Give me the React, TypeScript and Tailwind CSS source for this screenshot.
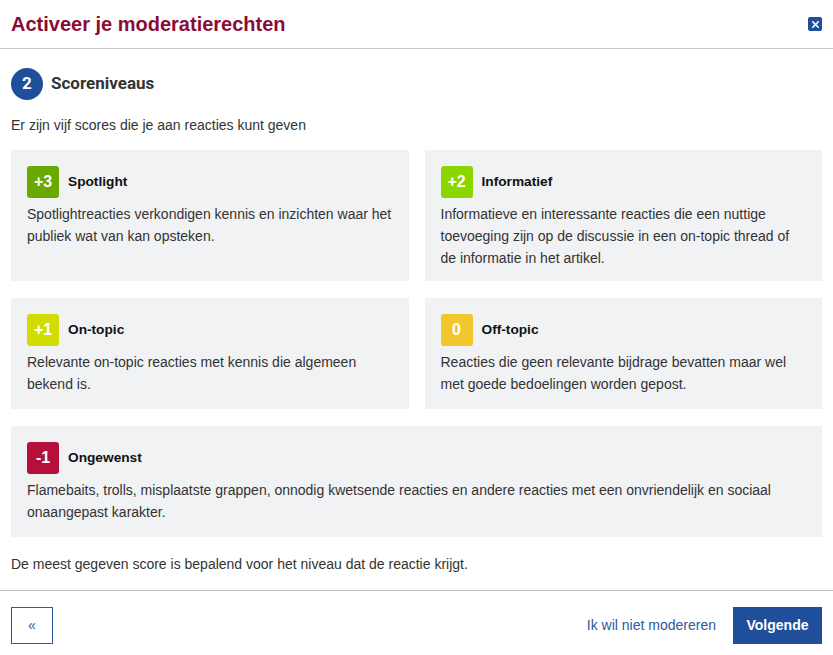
import { X } from "lucide-react";

type Score = {
  badge: string;
  color: string;
  title: string;
  text: string;
  wide?: boolean;
};

const scores: Score[] = [
  {
    badge: "+3",
    color: "bg-[#6aaa00]",
    title: "Spotlight",
    text: "Spotlightreacties verkondigen kennis en inzichten waar het publiek wat van kan opsteken.",
  },
  {
    badge: "+2",
    color: "bg-[#8cd600]",
    title: "Informatief",
    text: "Informatieve en interessante reacties die een nuttige toevoeging zijn op de discussie in een on-topic thread of de informatie in het artikel.",
  },
  {
    badge: "+1",
    color: "bg-[#d2dc00]",
    title: "On-topic",
    text: "Relevante on-topic reacties met kennis die algemeen bekend is.",
  },
  {
    badge: "0",
    color: "bg-[#f2c72c]",
    title: "Off-topic",
    text: "Reacties die geen relevante bijdrage bevatten maar wel met goede bedoelingen worden gepost.",
  },
  {
    badge: "-1",
    color: "bg-[#b5103c]",
    title: "Ongewenst",
    text: "Flamebaits, trolls, misplaatste grappen, onnodig kwetsende reacties en andere reacties met een onvriendelijk en sociaal onaangepast karakter.",
    wide: true,
  },
];

function ScoreCard({ s }: { s: Score }) {
  return (
    <div className={`min-h-[111px] bg-[#f1f2f4] px-4 pt-4 pb-3 ${s.wide ? "col-span-2" : ""}`}>
      <div className="flex items-center gap-[9px]">
        <span
          className={`${s.color} flex h-8 w-8 items-center justify-center rounded-[3px] text-[16px] font-bold text-white`}
        >
          {s.badge}
        </span>
        <span className="text-[13.7px] font-bold text-[#111]">{s.title}</span>
      </div>
      <p className="mt-[5px] text-[14px] leading-[22px] text-[#333]">{s.text}</p>
    </div>
  );
}

export default function App() {
  return (
    <div className="h-[655px] w-[833px] bg-white font-['Liberation_Sans',Arial,sans-serif] text-[#333]">
      <div className="flex h-[49px] items-center justify-between border-b border-[#c8c8c8] pl-[11px] pr-[11px]">
        <h1 className="text-[20px] font-bold text-[#8c0b35]">Activeer je moderatierechten</h1>
        <button
          type="button"
          className="flex h-[14px] w-[14px] items-center justify-center rounded-[2px] bg-[#1f4e9b] text-white"
        >
          <X size={11} strokeWidth={3.5} />
        </button>
      </div>

      <div className="px-[11px]">
        <div className="mt-[19px] flex items-center gap-2">
          <span className="flex h-8 w-8 items-center justify-center rounded-full bg-[#1f4e9b] font-['Roboto',sans-serif] text-[17px] font-bold text-white">
            2
          </span>
          <span className="font-['Roboto',sans-serif] text-[17px] font-bold text-[#333]">
            Scoreniveaus
          </span>
        </div>

        <p className="mt-[15px] text-[14px] leading-5 text-[#333]">
          Er zijn vijf scores die je aan reacties kunt geven
        </p>

        <div className="mt-[15px] grid grid-cols-2 gap-x-4 gap-y-[17px]">
          {scores.map((s) => (
            <ScoreCard key={s.badge} s={s} />
          ))}
        </div>

        <p className="mt-[17px] text-[14px] leading-5 text-[#333]">
          De meest gegeven score is bepalend voor het niveau dat de reactie krijgt.
        </p>
      </div>

      <div className="mt-[16px] flex items-center justify-between border-t border-[#b8bfc8] px-[11px] pt-4">
        <button
          type="button"
          className="flex h-[37px] w-[42px] items-center justify-center border border-[#2d5aa0] bg-white text-[14px] text-[#2d5aa0]"
        >
          «
        </button>
        <div className="flex items-center gap-[17px]">
          <a href="#" className="text-[14px] text-[#2d5aa0]">
            Ik wil niet modereren
          </a>
          <button
            type="button"
            className="h-[37px] w-[89px] bg-[#1f4e9b] text-[14px] font-bold text-white"
          >
            Volgende
          </button>
        </div>
      </div>
    </div>
  );
}
